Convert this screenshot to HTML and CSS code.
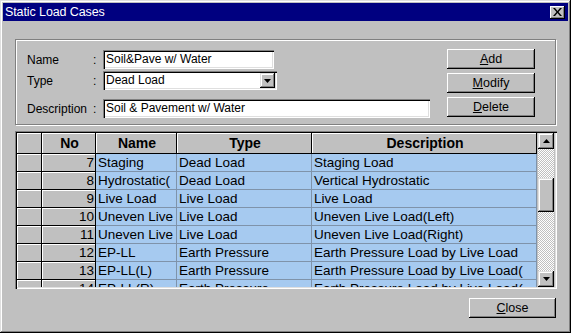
FILE: index.html
```html
<!DOCTYPE html>
<html>
<head>
<meta charset="utf-8">
<link rel="stylesheet" href="styles.css">
</head>
<body>
<div class="window">
  <div class="titlebar">
    <span class="title">Static Load Cases</span>
    <span class="tclose"><svg width="9" height="8" viewBox="0 0 9 8"><path d="M0 0h2l2.5 3 2.5-3h2l-3.5 4 3.5 4h-2l-2.5-3-2.5 3h-2l3.5-4z" fill="#000"/></svg></span>
  </div>
  <div class="content">
    <div class="group">
      <div class="form">
        <div class="lbl">Name</div><div class="colon">:</div>
        <div class="field w-name">Soil&amp;Pave w/ Water</div>
        <div class="lbl">Type</div><div class="colon">:</div>
        <div class="field w-type combo"><span>Dead Load</span><span class="dd"><svg width="7" height="4" viewBox="0 0 7 4"><path d="M0 0h7l-3.5 4z" fill="#000"/></svg></span></div>
        <div class="lbl lbl-desc">Description</div><div class="colon colon-desc">:</div>
        <div class="field w-desc row-desc">Soil &amp; Pavement w/ Water</div>
      </div>
      <div class="btncol">
        <div class="btn"><u>A</u>dd</div>
        <div class="btn"><u>M</u>odify</div>
        <div class="btn"><u>D</u>elete</div>
      </div>
    </div>

    <div class="gridbox">
      <div class="table">
        <div class="row head">
          <div class="c rh"></div><div class="c no">No</div><div class="c nm">Name</div><div class="c ty">Type</div><div class="c ds">Description</div>
        </div>
        <div class="row"><div class="c rh"></div><div class="c no">7</div><div class="c nm">Staging</div><div class="c ty">Dead Load</div><div class="c ds">Staging Load</div></div>
        <div class="row"><div class="c rh"></div><div class="c no">8</div><div class="c nm">Hydrostatic(</div><div class="c ty">Dead Load</div><div class="c ds">Vertical Hydrostatic</div></div>
        <div class="row"><div class="c rh"></div><div class="c no">9</div><div class="c nm">Live Load</div><div class="c ty">Live Load</div><div class="c ds">Live Load</div></div>
        <div class="row"><div class="c rh"></div><div class="c no">10</div><div class="c nm">Uneven Live</div><div class="c ty">Live Load</div><div class="c ds">Uneven Live Load(Left)</div></div>
        <div class="row"><div class="c rh"></div><div class="c no">11</div><div class="c nm">Uneven Live</div><div class="c ty">Live Load</div><div class="c ds">Uneven Live Load(Right)</div></div>
        <div class="row"><div class="c rh"></div><div class="c no">12</div><div class="c nm">EP-LL</div><div class="c ty">Earth Pressure</div><div class="c ds">Earth Pressure Load by Live Load</div></div>
        <div class="row"><div class="c rh"></div><div class="c no">13</div><div class="c nm">EP-LL(L)</div><div class="c ty">Earth Pressure</div><div class="c ds">Earth Pressure Load by Live Load(</div></div>
        <div class="row"><div class="c rh"></div><div class="c no">14</div><div class="c nm">EP-LL(R)</div><div class="c ty">Earth Pressure</div><div class="c ds">Earth Pressure Load by Live Load(</div></div>
      </div>
      <div class="vscroll">
        <div class="sbtn"><svg width="7" height="4" viewBox="0 0 7 4"><path d="M3.5 0l3.5 4h-7z" fill="#000"/></svg></div>
        <div class="track t1"></div>
        <div class="thumb"></div>
        <div class="track t2"></div>
        <div class="sbtn"><svg width="7" height="4" viewBox="0 0 7 4"><path d="M0 0h7l-3.5 4z" fill="#000"/></svg></div>
      </div>
    </div>

    <div class="footer">
      <div class="btn close-btn"><u>C</u>lose</div>
    </div>
  </div>
</div>
</body>
</html>
```

FILE: styles.css
```css
html, body {
  margin: 0;
  padding: 0;
  background: #c0c0c0;
}
body {
  font-family: "Liberation Sans", Arial, sans-serif;
  font-size: 12px;
  color: #000;
}
.window {
  width: 571px;
  height: 333px;
  box-sizing: border-box;
  padding: 3px 3px 3px 3px;
  background: #c0c0c0;
  box-shadow: inset -1px -1px #000, inset 1px 1px #dfdfdf, inset -2px -2px #808080, inset 2px 2px #fff;
  display: flex;
  flex-direction: column;
}
.titlebar {
  height: 18px;
  background: #000080;
  display: flex;
  align-items: center;
  justify-content: space-between;
  padding: 0 2px 0 2px;
}
.title {
  color: #fff;
  font-size: 12.5px;
  letter-spacing: -0.1px;
}
.tclose {
  width: 15px;
  height: 13px;
  background: #c0c0c0;
  box-shadow: inset -1px -1px #000, inset 1px 1px #fff, inset -2px -2px #808080;
  display: flex;
  align-items: center;
  justify-content: center;
  margin-right: 1px;
}
.tclose svg { margin-left: -1px; margin-top: -1px; }
.content {
  flex: 1;
  display: flex;
  flex-direction: column;
  padding: 18px 11px 0 12px;
}
.group {
  height: 86px;
  box-sizing: border-box;
  border: 1px solid #808080;
  box-shadow: inset 1px 1px #fff, 1px 1px #fff;
  display: flex;
  padding: 9px 20px 0 10px;
  margin-right: 1px;
}
.form {
  display: grid;
  grid-template-columns: 66px 11px auto;
  grid-template-rows: 19px 19px 19px;
  row-gap: 2px;
  align-items: center;
  margin-top: 1px;
}
.lbl { padding-left: 1px; }
.colon { padding-left: 1px; }
.lbl-desc, .colon-desc, .row-desc { margin-top: 14px; }
.field {
  height: 19px;
  box-sizing: border-box;
  background: #fff;
  box-shadow: inset 1px 1px #808080, inset 2px 2px #000, inset -1px -1px #fff, inset -2px -2px #dfdfdf;
  padding: 2px 3px 0 3px;
  line-height: 15px;
  white-space: nowrap;
  overflow: hidden;
}
.w-name { width: 171px; }
.w-type { width: 174px; }
.w-desc { width: 327px; }
.combo {
  display: flex;
  justify-content: space-between;
  padding-right: 2px;
}
.dd {
  width: 15px;
  height: 15px;
  margin-top: 0;
  background: #c0c0c0;
  box-shadow: inset -1px -1px #000, inset 1px 1px #dfdfdf, inset -2px -2px #808080, inset 2px 2px #fff;
  display: flex;
  align-items: center;
  justify-content: center;
}
.btncol {
  margin-left: auto;
  display: flex;
  flex-direction: column;
  gap: 4px;
}
.btn {
  width: 88px;
  height: 20px;
  box-sizing: border-box;
  background: #c0c0c0;
  box-shadow: inset -1px -1px #000, inset 1px 1px #fff, inset -2px -2px #808080;
  display: flex;
  align-items: center;
  justify-content: center;
  font-size: 12.5px;
}
.gridbox {
  margin-top: 6px;
  height: 158px;
  box-sizing: border-box;
  padding: 2px;
  box-shadow: inset 1px 1px #808080, inset 2px 2px #000, inset -1px -1px #fff, inset -2px -2px #dfdfdf;
  display: flex;
  background: #c0c0c0;
}
.table {
  width: 520px;
  overflow: hidden;
  font-size: 13.5px;
}
.row {
  display: flex;
  height: 18px;
  background: #a6caf0;
}
.row.head {
  height: 21px;
  background: #c0c0c0;
}
.c {
  box-sizing: border-box;
  border-right: 1px solid #000;
  border-bottom: 1px solid #7f93aa;
  white-space: nowrap;
  overflow: hidden;
  line-height: 17px;
  padding-left: 2px;
  flex: none;
}
.row.head .c {
  border-bottom: 1px solid #000;
  border-right: 1px solid #000;
  box-shadow: inset 1px 1px #fff;
  font-weight: bold;
  text-align: center;
  line-height: 20px;
  font-size: 14px;
}
.row:not(.head) .c.nm, .row:not(.head) .c.ty, .row:not(.head) .c.ds { border-right-color: #7f93aa; }
.rh { width: 25px; }
.no { width: 54px; }
.nm { width: 81px; }
.ty { width: 135px; }
.ds { width: 225px; }
.row:not(.head) .rh, .row:not(.head) .no {
  background: #c0c0c0;
  border-bottom-color: #000;
  box-shadow: inset 1px 1px #fff;
}
.row:not(.head) .no {
  text-align: right;
  padding-right: 1px;
}
.vscroll {
  width: 16px;
  margin-left: 1px;
  display: flex;
  flex-direction: column;
}
.sbtn {
  height: 16px;
  flex: none;
  background: #c0c0c0;
  box-shadow: inset -1px -1px #000, inset 1px 1px #dfdfdf, inset -2px -2px #808080, inset 2px 2px #fff;
  display: flex;
  align-items: center;
  justify-content: center;
}
.track {
  background: repeating-conic-gradient(#fff 0 25%, #c0c0c0 0 50%) 0 0 / 2px 2px;
}
.t1 { height: 29px; }
.t2 { flex: 1; }
.thumb {
  height: 34px;
  background: #c0c0c0;
  box-shadow: inset -1px -1px #000, inset 1px 1px #dfdfdf, inset -2px -2px #808080, inset 2px 2px #fff;
}
.footer {
  margin-top: 9px;
  display: flex;
  justify-content: flex-end;
  padding-right: 1px;
}
.close-btn { width: 87px; }
```
